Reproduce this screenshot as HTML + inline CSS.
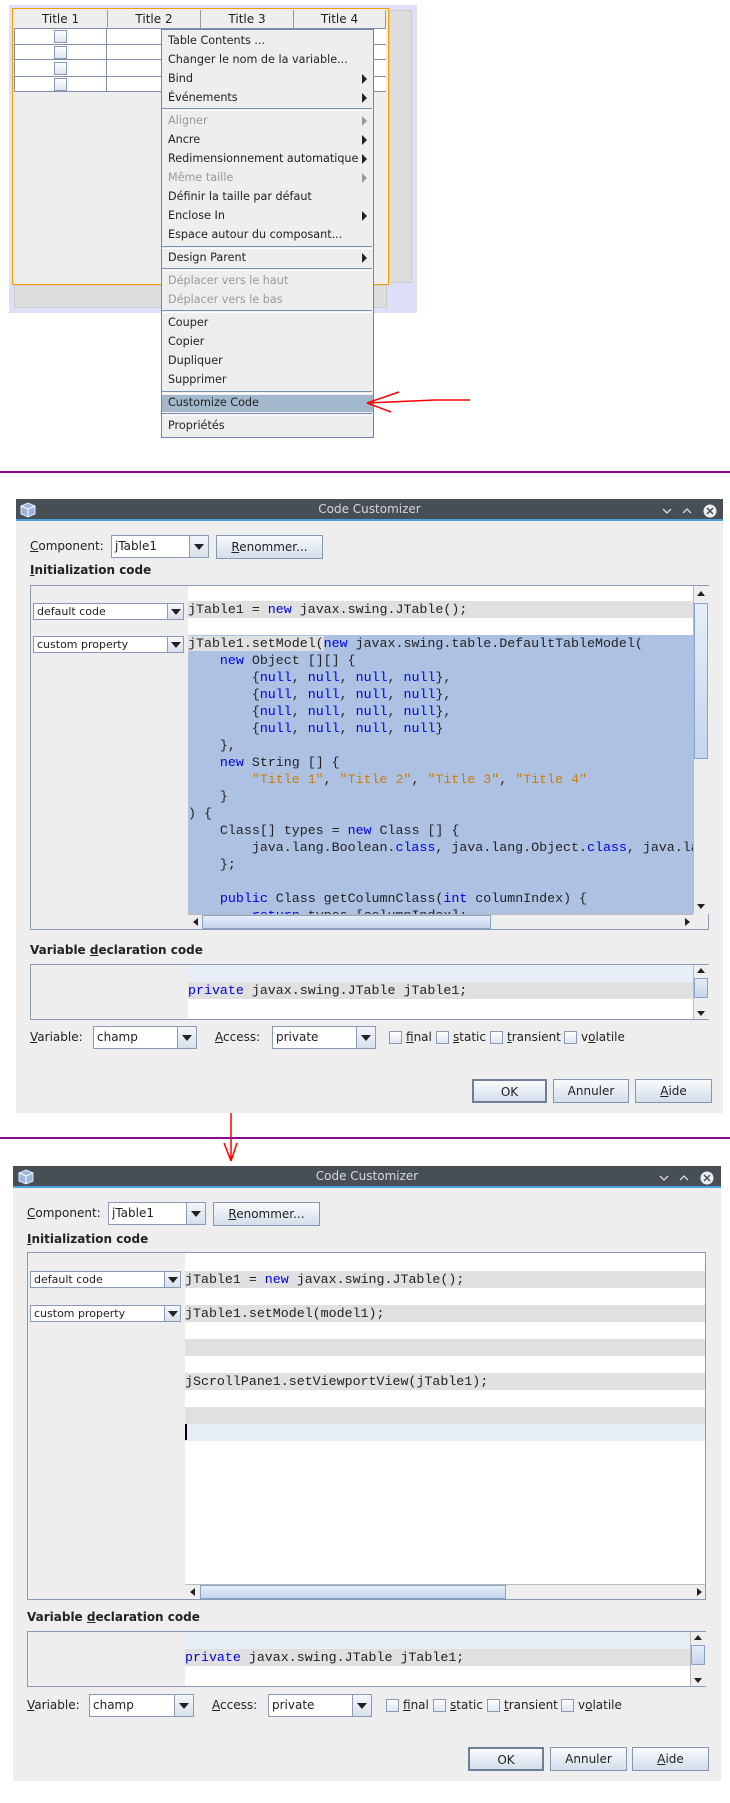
<!DOCTYPE html>
<html><head><meta charset="utf-8"><style>
*{margin:0;padding:0;box-sizing:border-box}
body{width:730px;height:1803px;background:#fff;position:relative;overflow:hidden;font-family:"DejaVu Sans","Liberation Sans",sans-serif;font-size:11px;color:#222}
.a{position:absolute}
.mi{position:absolute;left:168px;height:19px;line-height:19px;font-size:11.2px;color:#222;white-space:nowrap}
.dis{color:#999}
.arr{position:absolute;left:362px;width:0;height:0;border-top:5px solid transparent;border-bottom:5px solid transparent;border-left:5px solid #222}
.arr.d{border-left-color:#999}
.sep{position:absolute;left:162px;width:210px;height:3px;border-top:1px solid #7b8fbd;border-bottom:1px solid #fff;background:#eee}
.tb{position:absolute;height:22px;background:#474e56;border-bottom:2px solid #4aa3d9}
.tb .t{position:absolute;left:0;right:0;text-align:center;top:3px;color:#d8d8d8;font-size:12px}
.body{position:absolute;background:#eee}
.cb{position:absolute;background:#fff;border:1px solid #8a9ab4;height:23px}
.cb span{position:absolute;left:3px;top:3px;font-size:12px}
.cb i{position:absolute;right:0;top:0;bottom:0;width:19px;border-left:1px solid #8a9ab4;background:linear-gradient(#f4f6fa,#d8e0ec)}
.cb i:after{content:"";position:absolute;left:4px;top:8px;border-left:5px solid transparent;border-right:5px solid transparent;border-top:6px solid #222}
.cbs{height:17px}
.cbs span{top:1px;font-size:11px}
.cbs i{width:16px}
.cbs i:after{left:3px;top:5px}
.btn{position:absolute;height:24px;border:1px solid #8596b0;background:linear-gradient(#fafbfd,#d3ddea);text-align:center;line-height:22px;font-size:12px}
.lab{position:absolute;font-size:12px}
.hd{position:absolute;font-size:12px;font-weight:bold}
.box{position:absolute;border:1px solid #8a9ab4;background:#eee;overflow:hidden}
.code{position:absolute;background:#fff;overflow:hidden;font-family:"Liberation Mono",monospace;font-size:13.3px}
.ln{position:absolute;left:0;right:0;height:17px;line-height:17px;white-space:pre}
.g{background:#e0e0e0}
.s{background:#adc2e3}
.k{color:#0000e6}
.st{color:#ce7b00}
.chk{position:absolute;width:13px;height:13px;border:1px solid #8a9ab4;background:linear-gradient(#fff,#dde6f2)}
.cl{position:absolute;font-size:12px}
.vs{position:absolute;width:16px;background:#eee;border-left:1px solid #bbb}
.hs{position:absolute;height:15px;background:#eee;border-top:1px solid #bbb}
.th{position:absolute;background:linear-gradient(#e6eef9,#c5d5ec);border:1px solid #8aa3cc}
.up,.dn,.lf,.rt{position:absolute;width:0;height:0}
.up{border-left:4px solid transparent;border-right:4px solid transparent;border-bottom:5px solid #222}
.dn{border-left:4px solid transparent;border-right:4px solid transparent;border-top:5px solid #222}
.lf{border-top:4px solid transparent;border-bottom:4px solid transparent;border-right:5px solid #222}
.rt{border-top:4px solid transparent;border-bottom:4px solid transparent;border-left:5px solid #222}
u{text-decoration:underline}
</style></head><body>

<!-- TOP: table + popup menu -->
<div class="a" style="left:9px;top:5px;width:408px;height:308px;background:#dedff8"></div>
<div class="a" style="left:12px;top:8px;width:377px;height:277px;background:#eee;border:1px solid #f5a000"></div>
<div class="a" style="left:389px;top:10px;width:23px;height:273px;background:#ddd;border:1px solid #ccc"></div>
<div class="a" style="left:14px;top:285px;width:373px;height:23px;background:#ddd;border:1px solid #ccc"></div>
<div class="a" style="left:14px;top:10px;width:372px;height:82px;background:#fff;border-left:1px solid #7f8fa8"></div>
<div class="a" style="left:14px;top:10px;width:372px;height:19px;background:#eee;border-bottom:1px solid #7f8fa8"></div>
<div class="a" style="left:14px;top:10px;width:93px;text-align:center;font-size:12px;line-height:19px">Title 1</div>
<div class="a" style="left:107px;top:10px;width:93px;text-align:center;font-size:12px;line-height:19px;border-left:1px solid #999">Title 2</div>
<div class="a" style="left:200px;top:10px;width:93px;text-align:center;font-size:12px;line-height:19px;border-left:1px solid #999">Title 3</div>
<div class="a" style="left:293px;top:10px;width:93px;text-align:center;font-size:12px;line-height:19px;border-left:1px solid #999;border-right:1px solid #999">Title 4</div>
<div class="a" style="left:14px;top:44px;width:372px;height:16px;border-top:1px solid #7f8fa8;border-bottom:1px solid #7f8fa8"></div>
<div class="a" style="left:14px;top:76px;width:372px;height:16px;border-top:1px solid #7f8fa8;border-bottom:1px solid #7f8fa8"></div>
<div class="a" style="left:106px;top:29px;width:1px;height:63px;background:#7f8fa8"></div>
<div class="chk" style="left:54px;top:30px"></div><div class="chk" style="left:54px;top:46px"></div><div class="chk" style="left:54px;top:62px"></div><div class="chk" style="left:54px;top:78px"></div>

<div class="a" style="left:161px;top:29px;width:213px;height:409px;background:#eee;border:1px solid #6d84b4"></div>
<div class="mi" style="top:31px">Table Contents ...</div>
<div class="mi" style="top:50px">Changer le nom de la variable...</div>
<div class="mi" style="top:69px">Bind</div><div class="arr" style="top:74px"></div>
<div class="mi" style="top:88px">Événements</div><div class="arr" style="top:93px"></div>
<div class="sep" style="top:108px"></div>
<div class="mi dis" style="top:111px">Aligner</div><div class="arr d" style="top:116px"></div>
<div class="mi" style="top:130px">Ancre</div><div class="arr" style="top:135px"></div>
<div class="mi" style="top:149px">Redimensionnement automatique</div><div class="arr" style="top:154px"></div>
<div class="mi dis" style="top:168px">Même taille</div><div class="arr d" style="top:173px"></div>
<div class="mi" style="top:187px">Définir la taille par défaut</div>
<div class="mi" style="top:206px">Enclose In</div><div class="arr" style="top:211px"></div>
<div class="mi" style="top:225px">Espace autour du composant...</div>
<div class="sep" style="top:246px"></div>
<div class="mi" style="top:248px">Design Parent</div><div class="arr" style="top:253px"></div>
<div class="sep" style="top:268px"></div>
<div class="mi dis" style="top:271px">Déplacer vers le haut</div>
<div class="mi dis" style="top:290px">Déplacer vers le bas</div>
<div class="sep" style="top:310px"></div>
<div class="mi" style="top:313px">Couper</div>
<div class="mi" style="top:332px">Copier</div>
<div class="mi" style="top:351px">Dupliquer</div>
<div class="mi" style="top:370px">Supprimer</div>
<div class="sep" style="top:391px"></div>
<div class="a" style="left:162px;top:395px;width:211px;height:17px;background:#a3b8cc"></div>
<div class="mi" style="top:393px">Customize Code</div>
<div class="sep" style="top:413px"></div>
<div class="mi" style="top:416px">Propriétés</div>

<svg class="a" style="left:0;top:0" width="730" height="1803">
<g stroke="#f00" stroke-width="1.5" fill="none">
<path d="M470 400 L435 400 L367 403 M367 403 L399 392 M367 403 L391 412"/>
<path d="M231 1106 L231 1161 M231 1161 L224 1143 M231 1161 L237 1143"/>
<path d="M99 670 L97 628 M97 628 L90 637 M97 628 L112 641"/>
<path d="M672 688 L540 698 M540 698 L557 687 M540 698 L565 715"/>
<path d="M444 1364 L358 1344 M358 1344 L374 1343 M358 1344 L372 1353"/>
<path d="M378 1508 L463 1516 M463 1516 L447 1505 M463 1516 L435 1522"/>
</g>
<line x1="0" y1="472" x2="730" y2="472" stroke="#8a0a8a" stroke-width="2"/>
<line x1="0" y1="1138" x2="730" y2="1138" stroke="#8a0a8a" stroke-width="2"/>
</svg>

<!-- DIALOG 1 -->
<div class="body" style="left:16px;top:499px;width:707px;height:614px"></div>
<div class="tb" style="left:16px;top:499px;width:707px"><div class="t">Code Customizer</div></div>
<svg class="a" style="left:20px;top:502px" width="16" height="16"><path d="M8 1 L15 4 L15 12 L8 15 L1 12 L1 4Z" fill="#9bb6dc" stroke="#dce8f7"/><path d="M1 4 L8 7 L15 4 M8 7 L8 15" stroke="#fff" fill="none"/></svg>
<svg class="a" style="left:662px;top:503px" width="60" height="16"><path d="M1 6 L5 10 L9 6" stroke="#ddd" fill="none" stroke-width="1.3"/><path d="M21 10 L25 6 L29 10" stroke="#ddd" fill="none" stroke-width="1.3"/><circle cx="48" cy="8" r="6.5" fill="#eee"/><path d="M45 5 L51 11 M51 5 L45 11" stroke="#474e56" stroke-width="1.5"/></svg>

<div class="lab" style="left:30px;top:539px"><u>C</u>omponent:</div>
<div class="cb" style="left:111px;top:535px;width:98px"><span>jTable1</span><i></i></div>
<div class="btn" style="left:216px;top:535px;width:107px"><u>R</u>enommer...</div>
<div class="hd" style="left:30px;top:563px"><u>I</u>nitialization code</div>

<div class="box" style="left:30px;top:585px;width:679px;height:345px"></div>
<div class="cb cbs" style="left:33px;top:603px;width:151px"><span>default code</span><i></i></div>
<div class="cb cbs" style="left:33px;top:636px;width:151px"><span>custom property</span><i></i></div>
<div class="code" style="left:188px;top:586px;width:505px;height:328px">
<div class="ln g" style="top:15px">jTable1 = <span class="k">new</span> javax.swing.JTable();</div>
<div class="ln s" style="top:49px;height:280px"></div>
<div class="ln" style="top:49px"><span class="g">jTable1.setModel(</span><span class="k">new</span> javax.swing.table.DefaultTableModel(</div>
<div class="ln" style="top:66px">    <span class="k">new</span> Object [][] {</div>
<div class="ln" style="top:83px">        {<span class="k">null</span>, <span class="k">null</span>, <span class="k">null</span>, <span class="k">null</span>},</div>
<div class="ln" style="top:100px">        {<span class="k">null</span>, <span class="k">null</span>, <span class="k">null</span>, <span class="k">null</span>},</div>
<div class="ln" style="top:117px">        {<span class="k">null</span>, <span class="k">null</span>, <span class="k">null</span>, <span class="k">null</span>},</div>
<div class="ln" style="top:134px">        {<span class="k">null</span>, <span class="k">null</span>, <span class="k">null</span>, <span class="k">null</span>}</div>
<div class="ln" style="top:151px">    },</div>
<div class="ln" style="top:168px">    <span class="k">new</span> String [] {</div>
<div class="ln" style="top:185px">        <span class="st">"Title 1"</span>, <span class="st">"Title 2"</span>, <span class="st">"Title 3"</span>, <span class="st">"Title 4"</span></div>
<div class="ln" style="top:202px">    }</div>
<div class="ln" style="top:219px">) {</div>
<div class="ln" style="top:236px">    Class[] types = <span class="k">new</span> Class [] {</div>
<div class="ln" style="top:253px">        java.lang.Boolean.<span class="k">class</span>, java.lang.Object.<span class="k">class</span>, java.lang.Object.class</div>
<div class="ln" style="top:270px">    };</div>
<div class="ln" style="top:304px">    <span class="k">public</span> Class getColumnClass(<span class="k">int</span> columnIndex) {</div>
<div class="ln" style="top:321px">        <span class="k">return</span> types [columnIndex];</div>
</div>
<div class="vs" style="left:693px;top:586px;height:328px"></div>
<div class="up" style="left:697px;top:591px"></div>
<div class="dn" style="left:697px;top:904px"></div>
<div class="th" style="left:694px;top:603px;width:14px;height:156px"></div>
<div class="hs" style="left:188px;top:914px;width:505px"></div>
<div class="lf" style="left:193px;top:918px"></div>
<div class="rt" style="left:685px;top:918px"></div>
<div class="th" style="left:202px;top:915px;width:289px;height:14px"></div>

<div class="hd" style="left:30px;top:943px">Variable <u>d</u>eclaration code</div>
<div class="box" style="left:30px;top:964px;width:679px;height:56px"></div>
<div class="code" style="left:188px;top:965px;width:505px;height:54px">
<div class="ln" style="top:0;background:#e8eef8"></div>
<div class="ln g" style="top:17px"><span class="k">private</span> javax.swing.JTable jTable1;</div>
</div>
<div class="vs" style="left:693px;top:965px;height:54px"></div>
<div class="up" style="left:697px;top:968px"></div>
<div class="dn" style="left:697px;top:1011px"></div>
<div class="th" style="left:694px;top:978px;width:14px;height:20px"></div>

<div class="lab" style="left:30px;top:1030px"><u>V</u>ariable:</div>
<div class="cb" style="left:93px;top:1026px;width:104px"><span>champ</span><i></i></div>
<div class="lab" style="left:215px;top:1030px"><u>A</u>ccess:</div>
<div class="cb" style="left:272px;top:1026px;width:104px"><span>private</span><i></i></div>
<div class="chk" style="left:389px;top:1031px"></div><div class="cl" style="left:406px;top:1030px"><u>f</u>inal</div>
<div class="chk" style="left:436px;top:1031px"></div><div class="cl" style="left:453px;top:1030px"><u>s</u>tatic</div>
<div class="chk" style="left:490px;top:1031px"></div><div class="cl" style="left:507px;top:1030px"><u>t</u>ransient</div>
<div class="chk" style="left:564px;top:1031px"></div><div class="cl" style="left:581px;top:1030px">v<u>o</u>latile</div>

<div class="btn" style="left:472px;top:1079px;width:75px;border:2px solid #6f7f98">OK</div>
<div class="btn" style="left:553px;top:1079px;width:76px">Annuler</div>
<div class="btn" style="left:635px;top:1079px;width:77px"><u>A</u>ide</div>

<!-- DIALOG 2 -->
<div class="body" style="left:13px;top:1166px;width:708px;height:615px"></div>
<div class="tb" style="left:13px;top:1166px;width:708px"><div class="t">Code Customizer</div></div>
<svg class="a" style="left:18px;top:1169px" width="16" height="16"><path d="M8 1 L15 4 L15 12 L8 15 L1 12 L1 4Z" fill="#9bb6dc" stroke="#dce8f7"/><path d="M1 4 L8 7 L15 4 M8 7 L8 15" stroke="#fff" fill="none"/></svg>
<svg class="a" style="left:659px;top:1170px" width="60" height="16"><path d="M1 6 L5 10 L9 6" stroke="#ddd" fill="none" stroke-width="1.3"/><path d="M21 10 L25 6 L29 10" stroke="#ddd" fill="none" stroke-width="1.3"/><circle cx="48" cy="8" r="6.5" fill="#eee"/><path d="M45 5 L51 11 M51 5 L45 11" stroke="#474e56" stroke-width="1.5"/></svg>

<div class="lab" style="left:27px;top:1206px"><u>C</u>omponent:</div>
<div class="cb" style="left:108px;top:1202px;width:98px"><span>jTable1</span><i></i></div>
<div class="btn" style="left:213px;top:1202px;width:107px"><u>R</u>enommer...</div>
<div class="hd" style="left:27px;top:1232px"><u>I</u>nitialization code</div>

<div class="box" style="left:27px;top:1252px;width:679px;height:348px"></div>
<div class="cb cbs" style="left:30px;top:1271px;width:151px"><span>default code</span><i></i></div>
<div class="cb cbs" style="left:30px;top:1305px;width:151px"><span>custom property</span><i></i></div>
<div class="code" style="left:185px;top:1253px;width:520px;height:331px">
<div class="ln g" style="top:18px">jTable1 = <span class="k">new</span> javax.swing.JTable();</div>
<div class="ln g" style="top:52px">jTable1.setModel(model1);</div>
<div class="ln g" style="top:86px"></div>
<div class="ln g" style="top:120px">jScrollPane1.setViewportView(jTable1);</div>
<div class="ln g" style="top:154px"></div>
<div class="ln" style="top:171px;background:#e8eef8"><span style="display:inline-block;width:2px;height:16px;background:#000;vertical-align:top"></span></div>
</div>
<div class="hs" style="left:185px;top:1584px;width:520px"></div>
<div class="lf" style="left:190px;top:1588px"></div>
<div class="rt" style="left:697px;top:1588px"></div>
<div class="th" style="left:200px;top:1585px;width:306px;height:14px"></div>

<div class="hd" style="left:27px;top:1610px">Variable <u>d</u>eclaration code</div>
<div class="box" style="left:27px;top:1631px;width:679px;height:56px"></div>
<div class="code" style="left:185px;top:1632px;width:505px;height:54px">
<div class="ln" style="top:0;background:#e8eef8"></div>
<div class="ln g" style="top:17px"><span class="k">private</span> javax.swing.JTable jTable1;</div>
</div>
<div class="vs" style="left:690px;top:1632px;height:54px"></div>
<div class="up" style="left:694px;top:1635px"></div>
<div class="dn" style="left:694px;top:1678px"></div>
<div class="th" style="left:691px;top:1645px;width:14px;height:20px"></div>

<div class="lab" style="left:27px;top:1698px"><u>V</u>ariable:</div>
<div class="cb" style="left:89px;top:1694px;width:105px"><span>champ</span><i></i></div>
<div class="lab" style="left:212px;top:1698px"><u>A</u>ccess:</div>
<div class="cb" style="left:268px;top:1694px;width:104px"><span>private</span><i></i></div>
<div class="chk" style="left:386px;top:1699px"></div><div class="cl" style="left:403px;top:1698px"><u>f</u>inal</div>
<div class="chk" style="left:433px;top:1699px"></div><div class="cl" style="left:450px;top:1698px"><u>s</u>tatic</div>
<div class="chk" style="left:487px;top:1699px"></div><div class="cl" style="left:504px;top:1698px"><u>t</u>ransient</div>
<div class="chk" style="left:561px;top:1699px"></div><div class="cl" style="left:578px;top:1698px">v<u>o</u>latile</div>

<div class="btn" style="left:468px;top:1747px;width:76px;border:2px solid #6f7f98">OK</div>
<div class="btn" style="left:550px;top:1747px;width:77px">Annuler</div>
<div class="btn" style="left:632px;top:1747px;width:77px"><u>A</u>ide</div>

</body></html>
